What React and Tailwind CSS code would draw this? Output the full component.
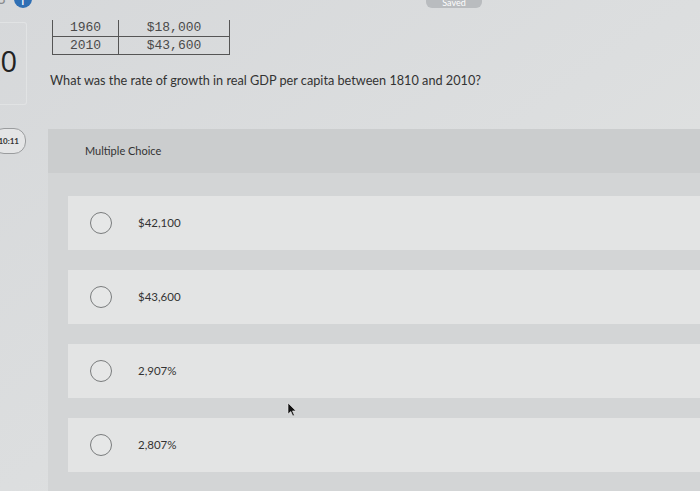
import React from "react";

const options = ["$42,100", "$43,600", "2,907%", "2,807%"];

export default function App() {
  return (
    <div className="relative w-[700px] h-[491px] overflow-hidden bg-gradient-to-br from-[#d6d8da] via-[#dcdedf] to-[#e4e5e3] font-['Lato',sans-serif]">
      <div className="flex h-full">
        {/* left rail */}
        <div className="w-[48px] shrink-0 flex flex-col">
          <div className="flex items-start h-[8px] overflow-visible">
            <span className="-mt-[9px] -ml-[3px] text-[15px] leading-none text-[#8a8c8e]">3</span>
            <span className="-mt-[10px] ml-[8px] w-[18px] h-[18px] rounded-full bg-[#2f6fb4] flex items-end justify-center text-white text-[10px] font-bold leading-none pb-[2px]">i</span>
          </div>
          <div className="mt-[14px] w-[27px] h-[83px] border border-l-0 border-[#e1e3e4] rounded-r-[3px] overflow-hidden flex items-center justify-end">
            <span className="text-[29px] leading-none text-[#222] font-['Open_Sans',sans-serif] pr-[9px] -mt-[6px]">0</span>
          </div>
          <div className="mt-[23px] -ml-[8px] w-[34px] h-[26px] border border-[#9a9c9e] rounded-[12px] flex items-center justify-end pr-[6px] bg-[#e4e5e6]">
            <span className="text-[8px] font-bold text-[#333]">10:11</span>
          </div>
        </div>

        {/* main */}
        <div className="flex-1 flex flex-col">
          <div className="h-[20px] relative">
            <div className="absolute left-[378px] -top-[9px] w-[56px] h-[17px] rounded-[6px] bg-[#b9bcbf] flex items-end justify-center pb-[1px]">
              <span className="text-[9px] text-white leading-none">Saved</span>
            </div>
          </div>
          <div className="ml-[4px] w-[178px] border-l border-r border-b border-[#555] font-['Liberation_Mono',monospace] text-[13px] text-[#4a4a4a]">
            <div className="flex h-[17px] border-b border-[#555]">
              <div className="w-[66px] border-r border-[#555] flex items-center justify-center">1960</div>
              <div className="flex-1 flex items-center justify-center">$18,000</div>
            </div>
            <div className="flex h-[17px]">
              <div className="w-[66px] border-r border-[#555] flex items-center justify-center">2010</div>
              <div className="flex-1 flex items-center justify-center">$43,600</div>
            </div>
          </div>
          <p className="mt-[17px] ml-[2px] text-[12.7px] leading-[16px] text-[#333]">
            What was the rate of growth in real GDP per capita between 1810 and 2010?
          </p>

          <div className="mt-[41px] flex-1 flex flex-col bg-[#d3d5d6]">
            <div className="h-[44px] bg-[#cbcdce] flex items-center pl-[37px]">
              <span className="text-[11px] text-[#333]">Multiple Choice</span>
            </div>
            <div className="flex flex-col gap-[20px] pt-[23px] pl-[20px]">
              {options.map((o) => (
                <div key={o} className="h-[54px] bg-[#e3e4e4] flex items-center pl-[22px]">
                  <span className="w-[22px] h-[22px] rounded-full border-[1.5px] border-[#7a7c7d] bg-[#e6e7e7]" />
                  <span className="ml-[26px] text-[11.5px] text-[#333]">{o}</span>
                </div>
              ))}
            </div>
          </div>
        </div>
      </div>

      {/* mouse cursor */}
      <svg className="absolute left-[287px] top-[402px]" width="10" height="15" viewBox="0 0 10 15">
        <path d="M1 1 L1 12 L3.8 9.5 L5.8 14 L7.4 13.3 L5.5 8.9 L9 8.9 Z" fill="#111" stroke="#eee" strokeWidth="0.6" />
      </svg>
    </div>
  );
}
